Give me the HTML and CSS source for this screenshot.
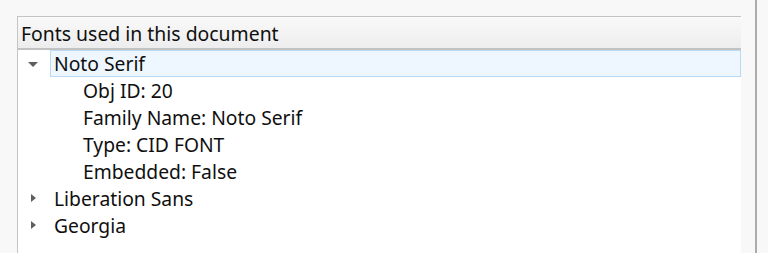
FILE: index.html
```html
<!DOCTYPE html>
<html lang="en">
  <head>
    <meta charset="UTF-8" />
    <title>Fonts</title>
    <link rel="stylesheet" href="styles.css">
  </head>
  <body>
    <div class="window">
      <div class="panel">
        <div class="panel__header">Fonts used in this document</div>
        <ul class="tree">
          <li class="tree__item open">
            <div class="tree__row selected"><span class="arrow down"></span><span class="label">Noto Serif</span></div>
            <ul class="tree__children">
              <li class="tree__row"><span class="label">Obj ID: 20</span></li>
              <li class="tree__row"><span class="label">Family Name: Noto Serif</span></li>
              <li class="tree__row"><span class="label">Type: CID FONT</span></li>
              <li class="tree__row"><span class="label">Embedded: False</span></li>
            </ul>
          </li>
          <li class="tree__item">
            <div class="tree__row"><span class="arrow right"></span><span class="label">Liberation Sans</span></div>
          </li>
          <li class="tree__item">
            <div class="tree__row"><span class="arrow right"></span><span class="label">Georgia</span></div>
          </li>
        </ul>
      </div>
      <div class="scrollbar"></div>
    </div>
  </body>
</html>
```

FILE: styles.css
```css
* {
  margin: 0;
  padding: 0;
  box-sizing: border-box;
}
body {
  background-color: #f8f8f8;
  font-family: "Noto Sans", sans-serif;
  color: #0f0f0f;
  height: 253px;
  overflow: hidden;
}
.window {
  display: flex;
  padding: 16px 0 0 17px;
  height: 253px;
}
.panel {
  width: 724px;
  background-color: #fff;
  border: 1px solid #c4c4c4;
  border-bottom: none;
  border-right: none;
}
.panel__header {
  height: 33px;
  padding: 4px 0 0 3px;
  font-size: 19.4px;
  line-height: 26px;
  background: linear-gradient(#f9f9f9, #ededed);
  border-bottom: 2px solid #c2c2c2;
}
.tree {
  list-style: none;
}
.tree__children {
  list-style: none;
  padding-left: 29px;
}
.tree__row {
  display: flex;
  align-items: center;
  height: 27px;
  font-size: 19.3px;
  padding-left: 32px;
  position: relative;
}
.tree__row .label {
  padding: 0 3px;
  line-height: 25px;
  border: 1px solid transparent;
}
.tree__row.selected .label {
  flex: 1;
  background-color: #eef7ff;
  border-color: #b9daf6;
}
.arrow {
  position: absolute;
  width: 0;
  height: 0;
}
.arrow.down {
  left: 10px;
  top: 12px;
  border-left: 5px solid transparent;
  border-right: 5px solid transparent;
  border-top: 5px solid #5e5e5e;
}
.arrow.right {
  left: 13px;
  top: 9px;
  border-top: 4px solid transparent;
  border-bottom: 4px solid transparent;
  border-left: 5px solid #5e5e5e;
}
.scrollbar {
  width: 2px;
  margin-left: 14px;
  margin-top: -16px;
  background-color: #ababab;
}
```
